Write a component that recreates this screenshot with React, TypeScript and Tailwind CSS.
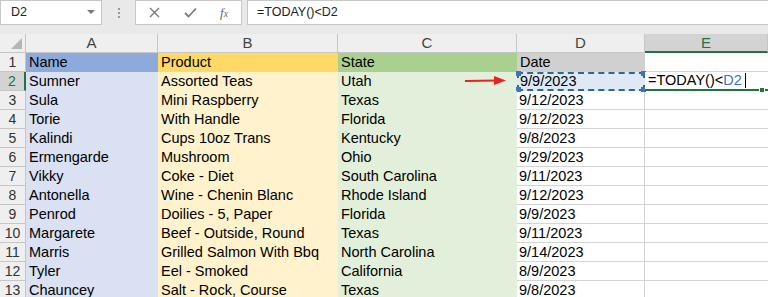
import React from 'react';

const rows: [string, string, string, string][] = [
  ['Sumner', 'Assorted Teas', 'Utah', '9/9/2023'],
  ['Sula', 'Mini Raspberry', 'Texas', '9/12/2023'],
  ['Torie', 'With Handle', 'Florida', '9/12/2023'],
  ['Kalindi', 'Cups 10oz Trans', 'Kentucky', '9/8/2023'],
  ['Ermengarde', 'Mushroom', 'Ohio', '9/29/2023'],
  ['Vikky', 'Coke - Diet', 'South Carolina', '9/11/2023'],
  ['Antonella', 'Wine - Chenin Blanc', 'Rhode Island', '9/12/2023'],
  ['Penrod', 'Doilies - 5, Paper', 'Florida', '9/9/2023'],
  ['Margarete', 'Beef - Outside, Round', 'Texas', '9/11/2023'],
  ['Marris', 'Grilled Salmon With Bbq', 'North Carolina', '9/14/2023'],
  ['Tyler', 'Eel - Smoked', 'California', '8/9/2023'],
  ['Chauncey', 'Salt - Rock, Course', 'Texas', '9/8/2023'],
];

const cols = ['A', 'B', 'C', 'D', 'E'];

function FormulaBar() {
  return (
    <div className="flex h-[25px] items-stretch bg-[#e9e9e9]">
      <div className="relative flex w-[102px] items-center border border-[#c6c6c6] bg-white pl-[10px] text-[12.5px] text-[#222]">
        D2
        <span className="absolute right-[6px] top-[9px] h-0 w-0 border-x-[4px] border-t-[4px] border-x-transparent border-t-[#777]" />
      </div>
      <div className="flex w-[33px] flex-col items-center justify-center gap-[2px]">
        <span className="h-[2px] w-[2px] bg-[#9a9a9a]" />
        <span className="h-[2px] w-[2px] bg-[#9a9a9a]" />
        <span className="h-[2px] w-[2px] bg-[#9a9a9a]" />
      </div>
      <div className="flex w-[107px] items-center border border-[#c6c6c6] bg-white">
        <svg className="ml-[13px]" width="11" height="11" viewBox="0 0 11 11">
          <path d="M1 1 L10 10 M10 1 L1 10" stroke="#7a7a7a" strokeWidth="1.4" />
        </svg>
        <svg className="ml-[24px]" width="13" height="11" viewBox="0 0 13 11">
          <path d="M1 6 L4.5 9.5 L12 1.5" stroke="#7a7a7a" strokeWidth="1.8" fill="none" />
        </svg>
        <span className="ml-[23px] font-['Liberation_Serif'] text-[13px] italic text-[#666]">
          f<span className="text-[10px]">x</span>
        </span>
      </div>
      <div className="ml-[5px] flex flex-1 items-center border border-r-0 border-[#c6c6c6] bg-white pl-[9px] text-[12.5px] text-[#222]">
        =TODAY()&lt;D2
      </div>
    </div>
  );
}

function App() {
  return (
    <div className="h-[297px] w-[768px] overflow-hidden bg-[#e9e9e9] font-['Liberation_Sans',Arial,sans-serif]">
      <FormulaBar />
      <div className="h-[9px]" />
      <div className="grid grid-cols-[26px_132px_180px_179px_128px_123px] auto-rows-[19px] text-[14.5px] leading-[19px]">
        {/* column header row */}
        <div className="relative border-b border-r border-[#c6c6c6] bg-[#efefef]">
          <span className="absolute bottom-[3px] right-[3px] h-0 w-0 border-b-[11px] border-l-[11px] border-b-[#b5b5b5] border-l-transparent" />
        </div>
        {cols.map((c) =>
          c === 'E' ? (
            <div key={c} className="border-b-2 border-r border-b-[#217346] border-r-[#c6c6c6] bg-[#d3d3d3] text-center text-[15px] leading-[18px] text-[#217346]">
              {c}
            </div>
          ) : (
            <div key={c} className="border-b border-r border-[#c6c6c6] bg-[#efefef] text-center text-[15px] leading-[18px] text-[#444]">
              {c}
            </div>
          )
        )}

        {/* row 1 */}
        <div className="border-b border-r border-[#c6c6c6] bg-[#efefef] text-center text-[14px] text-[#333]">1</div>
        <div className="bg-[#8eaadb] pl-[3px] text-black">Name</div>
        <div className="bg-[#ffd966] pl-[3px] text-black">Product</div>
        <div className="bg-[#a9d08e] pl-[3px] text-black">State</div>
        <div className="bg-[#d0d0d0] pl-[3px] text-black">Date</div>
        <div className="border-b border-[#d4d4d4] bg-white" />

        {rows.map((r, i) => {
          const n = i + 2;
          const active = n === 2;
          return (
            <React.Fragment key={n}>
              <div
                className={
                  active
                    ? 'border-b border-r-2 border-b-[#c6c6c6] border-r-[#217346] bg-[#d3d3d3] text-center text-[14px] text-[#217346]'
                    : 'border-b border-r border-[#c6c6c6] bg-[#efefef] text-center text-[14px] text-[#333]'
                }
              >
                {n}
              </div>
              <div className="whitespace-nowrap bg-[#d9e1f2] pl-[3px] text-black">{r[0]}</div>
              <div className="whitespace-nowrap bg-[#fff2cc] pl-[3px] text-black">{r[1]}</div>
              <div className="relative whitespace-nowrap bg-[#e2efda] pl-[3px] text-black">
                {r[2]}
                {active && (
                  <svg className="absolute left-[127px] top-[4px]" width="42" height="10" viewBox="0 0 42 10">
                    <path d="M0 5 L32 4.5" stroke="#e8231f" strokeWidth="2" />
                    <path d="M29 0 L41 4.5 L29 9 Z" fill="#e8231f" />
                  </svg>
                )}
              </div>
              {active ? (
                <div className="relative border-2 border-dashed border-[#2b6a8f] bg-[#dfe9f6] pl-[1px] text-black leading-[15px]">
                  {r[3]}
                  <span className="absolute -left-[3px] -top-[3px] h-[5px] w-[5px] bg-[#3a72c4]" />
                  <span className="absolute -right-[3px] -top-[3px] h-[5px] w-[5px] bg-[#3a72c4]" />
                  <span className="absolute -bottom-[3px] -left-[3px] h-[5px] w-[5px] bg-[#3a72c4]" />
                  <span className="absolute -bottom-[3px] -right-[3px] h-[5px] w-[5px] bg-[#3a72c4]" />
                </div>
              ) : (
                <div className="whitespace-nowrap border-b border-r border-[#d4d4d4] bg-white pl-[2px] text-black">{r[3]}</div>
              )}
              {active ? (
                <div className="relative border-b-2 border-b-[#217346] bg-white pl-[3px] leading-[17px] text-black">
                  =TODAY()&lt;<span className="text-[#3a72c4]">D2</span>
                  <span className="absolute left-[100px] top-[1px] h-[15px] w-px bg-black" />
                  <span className="absolute -bottom-[4px] right-[3px] h-[6px] w-[6px] border border-white bg-[#217346]" />
                </div>
              ) : (
                <div className="border-b border-[#d4d4d4] bg-white" />
              )}
            </React.Fragment>
          );
        })}
      </div>
    </div>
  );
}

export default App;
